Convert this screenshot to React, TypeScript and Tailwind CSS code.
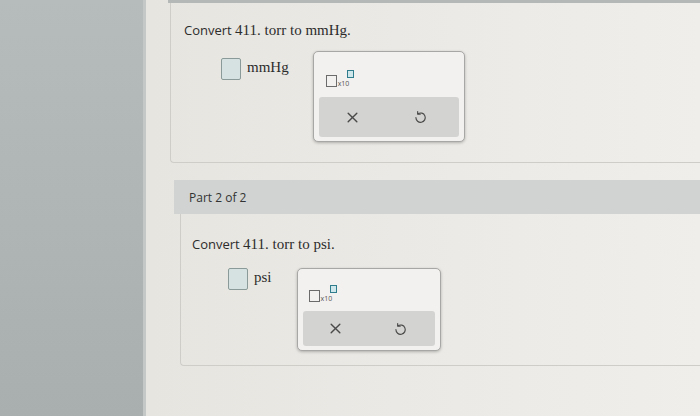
import React from "react";

const sans = { fontFamily: '"Open Sans", "DejaVu Sans", sans-serif' };
const serif = { fontFamily: '"Liberation Serif", "Times New Roman", serif' };

function Question({ unit }: { unit: string }) {
  return (
    <span className="text-[14px] text-[#2c2c2c]">
      <span style={sans} className="text-[13px]">Convert </span>
      <span style={serif} className="text-[15px]">
        411. torr to {unit}.
      </span>
    </span>
  );
}

function ExpIcon() {
  return (
    <div className="flex items-end">
      <div className="w-[11px] h-[12px] border border-[#6b6b6b]" />
      <span className="text-[7px] leading-none text-[#555] ml-[1px]" style={sans}>
        x10
      </span>
      <div className="w-[7px] h-[8px] border border-[#2f7d8c] bg-[#cfe6ea] mb-[9px] -ml-[2px]" />
    </div>
  );
}

function Undo() {
  return (
    <svg width="14" height="14" viewBox="0 0 24 24" fill="none" stroke="#4a4a4a" strokeWidth="2" strokeLinecap="round" strokeLinejoin="round">
      <path d="M8.5 6.5A8 8 0 1 1 5 13" />
      <path d="M8 2.5v4.5h4.5" />
    </svg>
  );
}

function Keypad({ wide }: { wide: boolean }) {
  return (
    <div
      className={`${wide ? "w-[152px] h-[91px]" : "w-[144px] h-[83px]"} bg-[#f2f1ef] border border-[#a7a7a5] rounded-[5px] shadow-[0_1px_3px_rgba(0,0,0,0.25)] flex flex-col px-[5px] pb-[4px]`}
    >
      <div className={`flex-1 flex items-center ${wide ? "pl-[7px] pt-[8px]" : "pl-[6px] pt-[6px]"}`}>
        <ExpIcon />
      </div>
      <div
        className={`${wide ? "h-[40px] pl-[27px] pr-[32px]" : "h-[35px] pl-[26px] pr-[28px]"} bg-[#d3d3d1] rounded-[3px] flex items-center justify-between`}
      >
        <svg width="13" height="13" viewBox="0 0 12 12" stroke="#4a4a4a" strokeWidth="1.3" strokeLinecap="round">
          <path d="M2 2l8 8M10 2l-8 8" />
        </svg>
        <Undo />
      </div>
    </div>
  );
}

function AnswerRow({ unit, wide }: { unit: string; wide: boolean }) {
  return (
    <div className="flex items-start">
      <div className={`flex items-start ${wide ? "pt-[7px]" : ""}`}>
        <div className="w-[20px] h-[22px] bg-[#d6e2e1] border border-[#8a9a98] rounded-[2px]" />
        <span className="ml-[6px] text-[15px] leading-[18px] text-[#2c2c2c]" style={serif}>
          {unit}
        </span>
      </div>
      <div className={wide ? "ml-[24px]" : "ml-[25px]"}>
        <Keypad wide={wide} />
      </div>
    </div>
  );
}

export default function App() {
  return (
    <div className="w-[700px] h-[416px] flex overflow-hidden bg-[#e9e7e2]">
      <div className="w-[146px] shrink-0 bg-gradient-to-b from-[#b6bcbb] to-[#a9afae] border-r-[3px] border-[#c4c9c8]" />
      <div className="flex-1 flex flex-col bg-gradient-to-r from-[#e7e5e0] to-[#efeeeb]">
        <div className="ml-[22px] h-[3px] bg-[#b4b8b7]" />
        <div className="ml-[24px] h-[160px] border-l border-b border-[#cfcdc8] rounded-bl-[4px] pl-[13px] pt-[15px]">
          <div className="leading-[22px]">
            <Question unit="mmHg" />
          </div>
          <div className="mt-[10px] ml-[37px]">
            <AnswerRow unit="mmHg" wide />
          </div>
        </div>
        <div className="ml-[28px] mt-[17px] h-[34px] bg-[#d0d3d2] flex items-center pl-[15px] pt-[2px]">
          <span className="text-[12px] text-[#333]" style={sans}>
            Part 2 of 2
          </span>
        </div>
        <div className="ml-[34px] h-[152px] border-l border-b border-[#cfcdc8] rounded-bl-[4px] pl-[11px] pt-[18px]">
          <div className="leading-[22px]">
            <Question unit="psi" />
          </div>
          <div className="mt-[13px] ml-[36px]">
            <AnswerRow unit="psi" wide={false} />
          </div>
        </div>
      </div>
    </div>
  );
}
